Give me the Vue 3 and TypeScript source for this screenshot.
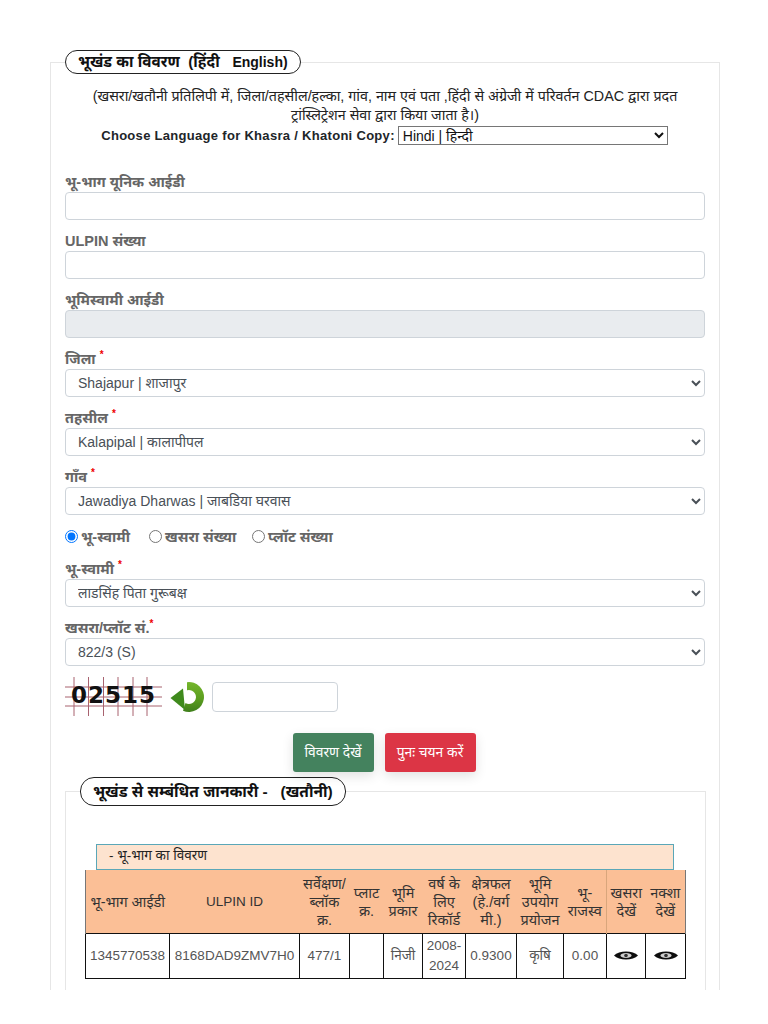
<script setup lang="ts">
import { ref } from 'vue';

interface Field {
  label: string;
  value: string;
}

const lang = ref('hi');
const searchBy = ref('owner');

const locationFields: Field[] = [
  { label: 'जिला ', value: 'Shajapur | शाजापुर' },
  { label: 'तहसील ', value: 'Kalapipal | कालापीपल' },
  { label: 'गाँव ', value: 'Jawadiya Dharwas | जाबडिया घरवास' },
];

const ownerFields: Field[] = [
  { label: 'भू-स्वामी ', value: 'लाडसिंह पिता गुरूबक्ष' },
  { label: 'खसरा/प्लॉट सं.', value: '822/3 (S)' },
];

const radios = [
  { id: 'owner', label: 'भू-स्वामी' },
  { id: 'khasra', label: 'खसरा संख्या' },
  { id: 'plot', label: 'प्लॉट संख्या' },
];

const gridX = [9, 23.5, 38.5, 53, 68, 82];
const gridY = [10, 20, 29];

const headers = [
  { text: 'भू-भाग आईडी', width: 84 },
  { text: 'ULPIN ID', width: 130 },
  { text: 'सर्वेक्षण/ ब्लॉक क्र.', width: 50 },
  { text: 'प्लाट क्र.', width: 34 },
  { text: 'भूमि प्रकार', width: 39 },
  { text: 'वर्ष के लिए रिकॉर्ड', width: 43 },
  { text: 'क्षेत्रफल (हे./वर्ग मी.)', width: 51 },
  { text: 'भूमि उपयोग प्रयोजन', width: 47 },
  { text: 'भू-राजस्व', width: 43 },
  { text: 'खसरा देखें', width: 39 },
  { text: 'नक्शा देखें', width: 40 },
];

const row = ['1345770538', '8168DAD9ZMV7H0', '477/1', '', 'निजी', '2008-2024', '0.9300', 'कृषि', '0.00'];
</script>

<template>
  <div class="page">
    <fieldset class="box outer">
      <legend class="pill">भूखंड का विवरण &nbsp;(हिंदी &nbsp; <span class="en">English)</span></legend>

      <p class="note">
        (खसरा/खतौनी प्रतिलिपी में, जिला/तहसील/हल्का, गांव, नाम एवं पता ,हिंदी से अंग्रेजी में परिवर्तन CDAC द्वारा प्रदत
        ट्रांस्लिट्रेशन सेवा द्वारा किया जाता है।)
      </p>
      <div class="lang-row">
        <label class="lang-label">Choose Language for Khasra / Khatoni Copy:</label>
        <select v-model="lang" class="lang-select">
          <option value="hi">Hindi | हिन्दी</option>
          <option value="en">English</option>
        </select>
      </div>

      <div class="fields">
        <div class="field">
          <label>भू-भाग यूनिक आईडी</label>
          <input class="control" type="text" />
        </div>
        <div class="field">
          <label>ULPIN संख्या</label>
          <input class="control" type="text" />
        </div>
        <div class="field">
          <label>भूमिस्वामी आईडी</label>
          <input class="control" type="text" disabled />
        </div>
        <div v-for="f in locationFields" :key="f.label" class="field">
          <label>{{ f.label }}<sup>*</sup></label>
          <select class="control"><option>{{ f.value }}</option></select>
        </div>

        <div class="radios">
          <label v-for="r in radios" :key="r.id" class="radio" :class="r.id">
            <input v-model="searchBy" type="radio" name="search" :value="r.id" />
            {{ r.label }}
          </label>
        </div>

        <div v-for="f in ownerFields" :key="f.label" class="field">
          <label>{{ f.label }}<sup>*</sup></label>
          <select class="control"><option>{{ f.value }}</option></select>
        </div>
      </div>

      <div class="captcha-row">
        <svg class="captcha" viewBox="0 0 97 39" width="97" height="39">
          <line v-for="x in gridX" :key="x" :x1="x" y1="0" :x2="x" y2="39" stroke="#a8626f" />
          <line v-for="y in gridY" :key="y" x1="0" :y1="y" x2="97" :y2="y" stroke="#a8626f" />
          <text x="48.500" y="26" text-anchor="middle" class="captcha-text">02515</text>
        </svg>
        <svg class="refresh" viewBox="0 0 36 32" width="36" height="32">
          <defs>
            <linearGradient id="ring" x1="0" y1="0" x2="0" y2="1">
              <stop offset="0" stop-color="#74b62c" />
              <stop offset="0.55" stop-color="#5c9e1f" />
              <stop offset="1" stop-color="#3f7f1c" />
            </linearGradient>
          </defs>
          <path d="M17 1.130A15 15 0 1 1 13 29.750L15.500 22.100A7 7 0 1 0 17 9.300Z" fill="url(#ring)" />
          <path d="M.5 17 13 7.500 15 29Z" fill="#3f8a1d" />
        </svg>
        <input class="captcha-input" type="text" />
      </div>

      <div class="actions">
        <button class="btn green">विवरण देखें</button>
        <button class="btn red">पुनः चयन करें</button>
      </div>

      <fieldset class="box inner">
        <legend class="pill">भूखंड से सम्बंधित जानकारी - &nbsp; (खतौनी)</legend>
        <div class="banner">- भू-भाग का विवरण</div>
        <table class="record">
          <colgroup>
            <col v-for="h in headers" :key="h.text" :style="{ width: h.width + 'px' }" />
          </colgroup>
          <thead>
            <tr>
              <th v-for="h in headers" :key="h.text">{{ h.text }}</th>
            </tr>
          </thead>
          <tbody>
            <tr>
              <td v-for="(c, i) in row" :key="i">{{ c }}</td>
              <td v-for="n in 2" :key="n">
                <svg class="eye" viewBox="0 0 24 9" width="24" height="9">
                  <path d="M0 4.500C5-.8 19-.8 24 4.500 19 9.800 5 9.800 0 4.500Z" fill="#0d0d0d" />
                  <ellipse cx="12" cy="4.500" rx="5.500" ry="2.600" fill="#cfcfcf" />
                  <circle cx="12" cy="4.500" r="1.800" fill="#333" />
                </svg>
              </td>
            </tr>
          </tbody>
        </table>
      </fieldset>
    </fieldset>
  </div>
</template>

<style scoped>
.page {
  height: 990px;
  overflow: hidden;
  padding: 50px 48px 0 50px;
  box-sizing: border-box;
  font-family: "Liberation Sans", "Noto Sans", sans-serif;
  font-size: 14px;
  color: #212529;
}

.box {
  margin: 0;
  border: 1px solid #e6e6e6;
  border-bottom: none;
  box-sizing: border-box;
  min-width: 0;
}

.outer {
  width: 670px;
  height: 1200px;
  padding: 0 14px;
}

.inner {
  width: 641px;
  height: 400px;
  margin-top: 5px;
  padding: 0 20px 0 19px;
}

.pill {
  height: 24px;
  box-sizing: border-box;
  padding: 0 12px;
  border: 1px solid #222;
  border-radius: 14px;
  font-size: 15.3px;
  line-height: 22px;
  font-weight: 700;
  color: #111;
  white-space: nowrap;
}

.en {
  font-size: 14px;
}

.inner > .pill {
  height: 29px;
  margin-left: -5px;
  font-size: 15.5px;
  line-height: 27px;
}

.note {
  margin: 13px 0 0;
  text-align: center;
  line-height: 19px;
  font-size: 14.3px;
  padding: 0 10px;
  color: #222;
}

.lang-row {
  display: flex;
  justify-content: center;
  align-items: center;
  gap: 3px;
  height: 20px;
  padding-right: 1px;
}

.lang-label {
  font-size: 13px;
  font-weight: 700;
  letter-spacing: 0.3px;
}

.lang-select {
  width: 270px;
  height: 19px;
  padding: 0;
  font-family: inherit;
  font-size: 14px;
  background: #fff;
  color: #111;
  border: 1px solid #767676;
  border-radius: 0;
}

.fields {
  margin-top: 25px;
}

.field {
  height: 59px;
}

.field label {
  display: block;
  height: 22px;
  line-height: 24px;
  font-size: 14.5px;
  font-weight: 700;
  color: #666;
}

.field sup {
  color: #e00;
  font-size: 10px;
  line-height: 0;
}

.control {
  display: block;
  width: 100%;
  height: 28px;
  box-sizing: border-box;
  padding: 0 8px;
  border: 1px solid #ced4da;
  border-radius: 4px;
  background: #fff;
  font-family: inherit;
  font-size: 14px;
  color: #495057;
  outline: none;
}

.control:disabled {
  background: #e9ecef;
}

.radios {
  display: flex;
  align-items: center;
  height: 22px;
  margin-top: 1px;
  margin-bottom: 10px;
}

.radio {
  display: flex;
  align-items: center;
  gap: 3px;
  font-weight: 700;
  font-size: 14.5px;
  color: #666;
  white-space: nowrap;
}

.radio input {
  width: 13px;
  height: 13px;
  margin: 0;
}

.radio.owner {
  width: 84px;
}

.radio.khasra {
  width: 103px;
}

.captcha-row {
  display: flex;
  align-items: center;
  margin-top: 2px;
}

.captcha-text {
  font-family: "DejaVu Sans", sans-serif;
  font-size: 23px;
  font-weight: 700;
  letter-spacing: 1px;
  fill: #111;
}

.refresh {
  margin-left: 8px;
}

.captcha-input {
  width: 126px;
  height: 30px;
  box-sizing: border-box;
  margin-left: 6px;
  border: 1px solid #ced4da;
  border-radius: 4px;
  background: #fff;
}

.actions {
  display: flex;
  justify-content: center;
  gap: 11px;
  margin-top: 17px;
  padding-right: 2px;
}

.btn {
  height: 39px;
  border: none;
  border-radius: 3px;
  font-family: inherit;
  font-size: 13.8px;
  padding: 0 0 2px;
  color: #fff;
  box-shadow: 0 4px 12px rgba(0, 0, 0, 0.12);
}

.green {
  width: 81px;
  background: #44825e;
}

.red {
  width: 91px;
  background: #dc3545;
}

.banner {
  width: 578px;
  height: 26px;
  box-sizing: border-box;
  margin: 38px 0 0 11px;
  padding-left: 12px;
  border: 1px solid #5aa7b8;
  background: #fde3cf;
  font-size: 13.5px;
  line-height: 22px;
  color: #222;
}

.record {
  width: 600px;
  table-layout: fixed;
  border-collapse: collapse;
  font-size: 13.5px;
  text-align: center;
}

.record th {
  height: 63px;
  padding: 0 2px;
  background: #fbbf96;
  font-weight: 400;
  font-size: 14.5px;
  line-height: 18px;
  color: #333;
}

.record th:nth-child(2) {
  font-size: 13.5px;
}

.record th:first-child {
  border-left: 1px solid #777;
}

.record th:last-child {
  border-right: 1px solid #777;
}

.record th:nth-child(10) {
  border-left: 1px solid #d9a67c;
}

.record td {
  height: 44px;
  padding: 0;
  border: 1px solid #111;
  line-height: 20px;
  color: #555;
}

.eye {
  display: inline-block;
  margin-top: 5px;
}
</style>

<style>
body {
  background: #fff;
}
</style>
